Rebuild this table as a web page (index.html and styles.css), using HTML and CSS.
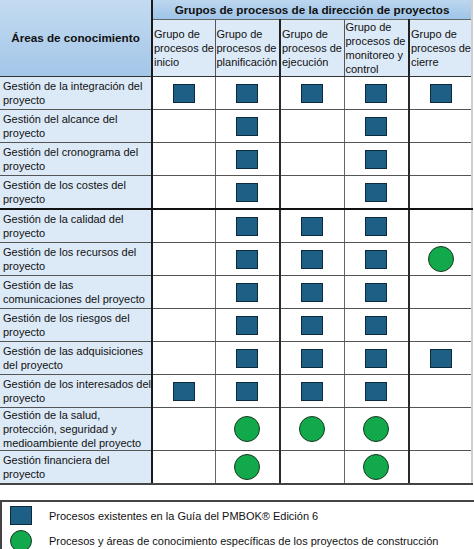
FILE: index.html
```html
<!DOCTYPE html>
<html lang="es">
<head>
    <meta charset="UTF-8">
    <title>Áreas de conocimiento y grupos de procesos</title>
    <link rel="stylesheet" href="styles.css">
</head>
<body>

    <table class="matrix">
        <colgroup>
            <col class="c-area">
            <col class="c1"><col class="c2"><col class="c3"><col class="c4"><col class="c5">
        </colgroup>
        <thead>
            <tr class="head-top">
                <th rowspan="2" class="area-head">Áreas de conocimiento</th>
                <th colspan="5" class="group-head">Grupos de procesos de la dirección de proyectos</th>
            </tr>
            <tr class="head-sub">
                <th class="b-thin">Grupo de procesos de inicio</th>
                <th class="b-dark">Grupo de procesos de planificación</th>
                <th class="b-thin">Grupo de procesos de ejecución</th>
                <th class="b-dark">Grupo de procesos de monitoreo y control</th>
                <th>Grupo de procesos de cierre</th>
            </tr>
        </thead>
        <tbody>
            <tr>
                <td class="area">Gestión de la integración del proyecto</td>
                <td class="b-thin"><span class="sq"></span></td>
                <td class="b-dark"><span class="sq"></span></td>
                <td class="b-thin"><span class="sq"></span></td>
                <td class="b-dark"><span class="sq"></span></td>
                <td><span class="sq"></span></td>
            </tr>
            <tr>
                <td class="area">Gestión del alcance del proyecto</td>
                <td class="b-thin"></td>
                <td class="b-dark"><span class="sq"></span></td>
                <td class="b-thin"></td>
                <td class="b-dark"><span class="sq"></span></td>
                <td></td>
            </tr>
            <tr>
                <td class="area">Gestión del cronograma del proyecto</td>
                <td class="b-thin"></td>
                <td class="b-dark"><span class="sq"></span></td>
                <td class="b-thin"></td>
                <td class="b-dark"><span class="sq"></span></td>
                <td></td>
            </tr>
            <tr class="row-dark">
                <td class="area">Gestión de los costes del proyecto</td>
                <td class="b-thin"></td>
                <td class="b-dark"><span class="sq"></span></td>
                <td class="b-thin"></td>
                <td class="b-dark"><span class="sq"></span></td>
                <td></td>
            </tr>
            <tr>
                <td class="area">Gestión de la calidad del proyecto</td>
                <td class="b-thin"></td>
                <td class="b-dark"><span class="sq"></span></td>
                <td class="b-thin"><span class="sq"></span></td>
                <td class="b-dark"><span class="sq"></span></td>
                <td></td>
            </tr>
            <tr>
                <td class="area">Gestión de los recursos del proyecto</td>
                <td class="b-thin"></td>
                <td class="b-dark"><span class="sq"></span></td>
                <td class="b-thin"><span class="sq"></span></td>
                <td class="b-dark"><span class="sq"></span></td>
                <td><span class="dot"></span></td>
            </tr>
            <tr>
                <td class="area">Gestión de las comunicaciones del proyecto</td>
                <td class="b-thin"></td>
                <td class="b-dark"><span class="sq"></span></td>
                <td class="b-thin"><span class="sq"></span></td>
                <td class="b-dark"><span class="sq"></span></td>
                <td></td>
            </tr>
            <tr>
                <td class="area">Gestión de los riesgos del proyecto</td>
                <td class="b-thin"></td>
                <td class="b-dark"><span class="sq"></span></td>
                <td class="b-thin"><span class="sq"></span></td>
                <td class="b-dark"><span class="sq"></span></td>
                <td></td>
            </tr>
            <tr>
                <td class="area">Gestión de las adquisiciones del proyecto</td>
                <td class="b-thin"></td>
                <td class="b-dark"><span class="sq"></span></td>
                <td class="b-thin"><span class="sq"></span></td>
                <td class="b-dark"><span class="sq"></span></td>
                <td><span class="sq"></span></td>
            </tr>
            <tr>
                <td class="area">Gestión de los interesados del proyecto</td>
                <td class="b-thin"><span class="sq"></span></td>
                <td class="b-dark"><span class="sq"></span></td>
                <td class="b-thin"><span class="sq"></span></td>
                <td class="b-dark"><span class="sq"></span></td>
                <td></td>
            </tr>
            <tr class="row-tall">
                <td class="area">Gestión de la salud, protección, seguridad y medioambiente del proyecto</td>
                <td class="b-thin"></td>
                <td class="b-dark"><span class="dot"></span></td>
                <td class="b-thin"><span class="dot"></span></td>
                <td class="b-dark"><span class="dot"></span></td>
                <td></td>
            </tr>
            <tr class="row-last">
                <td class="area">Gestión financiera del proyecto</td>
                <td class="b-thin"></td>
                <td class="b-dark"><span class="dot"></span></td>
                <td class="b-thin"></td>
                <td class="b-dark"><span class="dot"></span></td>
                <td></td>
            </tr>
        </tbody>
    </table>

    <div class="legend">
        <div class="legend-item">
            <span class="sq legend-sq"></span>
            <span>Procesos existentes en la Guía del PMBOK® Edición 6</span>
        </div>
        <div class="legend-item">
            <span class="dot legend-dot"></span>
            <span>Procesos y áreas de conocimiento específicas de los proyectos de construcción</span>
        </div>
    </div>

</body>
</html>
```

FILE: styles.css
```css
body {
    margin: 0;
    background: #fff;
    font-family: "Liberation Sans", Arial, sans-serif;
    font-size: 11px;
    color: #111;
    width: 474px;
    height: 549px;
    overflow: hidden;
}
.matrix {
    border-collapse: collapse;
    table-layout: fixed;
    width: 472px;
    border-right: 2px solid #cfcfcf;
}
.c-area { width: 152px; }
.c1 { width: 63px; }
.c2 { width: 65px; }
.c3 { width: 64px; }
.c4 { width: 65px; }
.c5 { width: 63px; }

th, td {
    padding: 0;
    line-height: 14px;
    border-bottom: 1px solid #555;
}
.head-top th {
    height: 19px;
    background: linear-gradient(#bcd6ef, #9fc4e8);
    font-size: 11.7px;
    font-weight: bold;
    color: #111;
}
.area-head {
    border-right: 2px solid #1a1a1a;
    background: linear-gradient(#c4dbf1, #a3c6e8) !important;
    border-bottom: 1px solid #333 !important;
}
.group-head {
    border-bottom: 1px solid #666;
}
.head-sub th {
    height: 53px;
    background: #dce9f7;
    font-weight: normal;
    text-align: left;
    vertical-align: middle;
    padding-left: 1px;
    border-bottom: 1px solid #333;
}
td {
    height: 32px;
    text-align: center;
    vertical-align: middle;
}
td.area {
    text-align: left;
    padding-left: 3px;
    background: #dce9f7;
    border-right: 2px solid #1a1a1a;
}
.b-thin { border-right: 1px solid #666; }
.b-dark { border-right: 2px solid #2a2a2a; }
.head-sub th.b-thin { border-right: 1px solid #555; }
.head-sub th.b-dark { border-right: 2px solid #222; }

.row-dark td { border-bottom: 2px solid #111; }
.row-tall td { height: 41px; }
.row-last td { border-bottom: 2px solid #444; }

.sq {
    display: inline-block;
    width: 20px;
    height: 17px;
    background: #1e5f86;
    border: 1px solid #0c2a3c;
    vertical-align: middle;
}
.dot {
    display: inline-block;
    width: 24px;
    height: 24px;
    border-radius: 50%;
    background: #12a84c;
    border: 1.5px solid #163a20;
    vertical-align: middle;
}

.legend {
    margin-top: 15px;
    border-top: 2px solid #444;
    border-left: 2px solid #444;
    height: 54px;
    display: flex;
    flex-direction: column;
    gap: 2px;
    padding: 2px 0 0 8px;
}
.legend-item {
    display: flex;
    align-items: center;
    gap: 17px;
    height: 23px;
}
.legend-sq {
    width: 20px;
    height: 17px;
}
.legend-dot {
    width: 20px;
    height: 20px;
}
```
